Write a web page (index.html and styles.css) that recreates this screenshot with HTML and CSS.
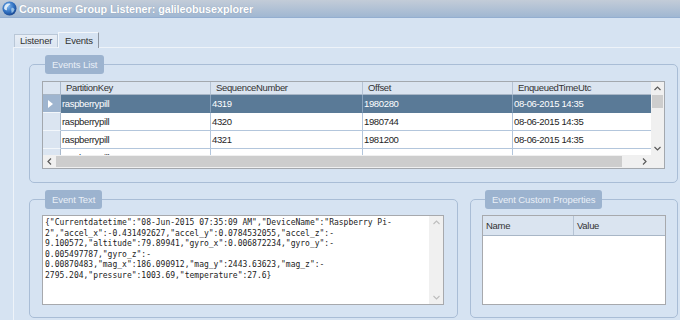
FILE: index.html
```html
<!DOCTYPE html>
<html>
<head>
<meta charset="utf-8">
<link rel="stylesheet" href="styles.css">
</head>
<body>
<div class="window">
  <div class="titlebar">
    <svg class="globe" width="15" height="15" viewBox="0 0 15 15">
      <defs>
        <radialGradient id="g1" cx="0.4" cy="0.35" r="0.7">
          <stop offset="0" stop-color="#7fb6ee"/>
          <stop offset="0.6" stop-color="#2f6fc0"/>
          <stop offset="1" stop-color="#17428a"/>
        </radialGradient>
      </defs>
      <circle cx="7.5" cy="7.5" r="7" fill="url(#g1)"/>
      <path d="M3 4.5 C4.5 2.5 7 2 8.5 3 C7.5 4 6.5 4.2 6 5.5 C5 6 4.5 7.5 5 9 C4 9.5 3 9 2.2 8 C2 6.8 2.3 5.5 3 4.5 Z" fill="#e9f3fb" opacity="0.9"/>
      <path d="M9.5 7 C10.5 6.5 12 7 12.5 8.5 C12 10 11 11.5 9.5 12 C9.8 10.5 9 9.5 9.2 8.5 Z" fill="#bfe0f5" opacity="0.7"/>
    </svg>
    <span class="title">Consumer Group Listener: galileobusexplorer</span>
  </div>
  <div class="tabstrip">
    <div class="tab">Listener</div>
    <div class="tab active">Events</div>
  </div>
  <div class="tabpage">
    <fieldset class="group events-list">
      <legend>Events List</legend>
      <div class="dgv">
        <div class="dgv-main">
          <div class="dgv-cells">
            <div class="dgv-row head">
              <div class="rh"></div>
              <div class="c">PartitionKey</div>
              <div class="c">SequenceNumber</div>
              <div class="c">Offset</div>
              <div class="c">EnqueuedTimeUtc</div>
            </div>
            <div class="dgv-row sel">
              <div class="rh"><svg width="5" height="8" viewBox="0 0 5 8"><path d="M0 0 L5 4 L0 8 Z" fill="#fff"/></svg></div>
              <div class="c">raspberrypill</div>
              <div class="c">4319</div>
              <div class="c">1980280</div>
              <div class="c">08-06-2015 14:35</div>
            </div>
            <div class="dgv-row">
              <div class="rh"></div>
              <div class="c">raspberrypill</div>
              <div class="c">4320</div>
              <div class="c">1980744</div>
              <div class="c">08-06-2015 14:35</div>
            </div>
            <div class="dgv-row">
              <div class="rh"></div>
              <div class="c">raspberrypill</div>
              <div class="c">4321</div>
              <div class="c">1981200</div>
              <div class="c">08-06-2015 14:35</div>
            </div>
            <div class="dgv-row">
              <div class="rh"></div>
              <div class="c">raspberrypill</div>
              <div class="c">4322</div>
              <div class="c">1981664</div>
              <div class="c">08-06-2015 14:35</div>
            </div>
          </div>
          <div class="vscroll">
            <div class="arrow"><svg width="7" height="5" viewBox="0 0 7 5"><path d="M0.5 4 L3.5 1 L6.5 4" fill="none" stroke="#5a5a5a" stroke-width="1.2"/></svg></div>
            <div class="vthumb"></div>
            <div class="track"></div>
            <div class="arrow"><svg width="7" height="5" viewBox="0 0 7 5"><path d="M0.5 1 L3.5 4 L6.5 1" fill="none" stroke="#5a5a5a" stroke-width="1.2"/></svg></div>
          </div>
        </div>
        <div class="hrow">
          <div class="hscroll">
            <div class="arrow"><svg width="5" height="7" viewBox="0 0 5 7"><path d="M4 0.5 L1 3.5 L4 6.5" fill="none" stroke="#5a5a5a" stroke-width="1.2"/></svg></div>
            <div class="hthumb"></div>
            <div class="track"></div>
            <div class="arrow"><svg width="5" height="7" viewBox="0 0 5 7"><path d="M1 0.5 L4 3.5 L1 6.5" fill="none" stroke="#5a5a5a" stroke-width="1.2"/></svg></div>
          </div>
          <div class="corner"></div>
        </div>
      </div>
    </fieldset>
    <div class="bottom-row">
      <fieldset class="group event-text">
        <legend>Event Text</legend>
        <div class="textbox">
          <div class="text">{"Currentdatetime":"08-Jun-2015 07:35:09 AM","DeviceName":"Raspberry Pi-
2","accel_x":-0.431492627,"accel_y":0.0784532055,"accel_z":-
9.100572,"altitude":79.89941,"gyro_x":0.006872234,"gyro_y":-
0.005497787,"gyro_z":-
0.00870483,"mag_x":186.090912,"mag_y":2443.63623,"mag_z":-
2795.204,"pressure":1003.69,"temperature":27.6}</div>
          <div class="tvscroll">
            <div class="arrow"><svg width="7" height="5" viewBox="0 0 7 5"><path d="M0.5 4 L3.5 1 L6.5 4" fill="none" stroke="#bdbdbd" stroke-width="1.1"/></svg></div>
            <div class="track"></div>
            <div class="arrow"><svg width="7" height="5" viewBox="0 0 7 5"><path d="M0.5 1 L3.5 4 L6.5 1" fill="none" stroke="#bdbdbd" stroke-width="1.1"/></svg></div>
          </div>
        </div>
      </fieldset>
      <fieldset class="group custom-props">
        <legend>Event Custom Properties</legend>
        <div class="propgrid">
          <div class="prophead">
            <div class="pc name">Name</div>
            <div class="pc">Value</div>
          </div>
        </div>
      </fieldset>
    </div>
  </div>
</div>
</body>
</html>
```
FILE: styles.css
```css
html, body {
  margin: 0;
  padding: 0;
}
body {
  background: #d6e3f2;
  font-family: "Liberation Sans", Arial, sans-serif;
}
.window {
  width: 680px;
  height: 320px;
  overflow: hidden;
  background: #d6e3f2;
}
.titlebar {
  height: 17px;
  border-bottom: 1px solid #93aed0;
  background: linear-gradient(#c3ccd8, #a0b7d2);
  display: flex;
  align-items: center;
  padding-left: 2px;
}
.globe {
  display: block;
  margin-right: 2px;
}
.title {
  color: #ffffff;
  font-weight: bold;
  font-size: 10.8px;
  letter-spacing: -0.05px;
  text-shadow: 0 0 1px rgba(60, 80, 110, 0.35);
}
.tabstrip {
  height: 29px;
  display: flex;
  align-items: flex-end;
  padding-left: 14px;
}
.tab {
  box-sizing: border-box;
  height: 13px;
  width: 44px;
  border: 1px solid #b9c7d7;
  border-bottom: none;
  background: linear-gradient(#e8eef6, #dbe5f1);
  font-size: 9.5px;
  color: #333;
  line-height: 12px;
  padding-left: 5px;
  letter-spacing: -0.2px;
}
.tab.active {
  height: 16px;
  width: 41px;
  background: #d6e3f2;
  border-left: 1px solid #f3f7fb;
  border-top: 1px solid #f3f7fb;
  border-right: 1px solid #8d96a2;
  line-height: 15px;
  padding-left: 6px;
  margin-bottom: -1px;
  position: relative;
}
.tabpage {
  margin-left: 13px;
  border-top: 1px solid #eef3f9;
  border-left: 1px solid #eef3f9;
  padding: 7px 2px 0 15px;
  height: 300px;
}
.group {
  margin: 0;
  border: 1px solid #a9bdd6;
  border-radius: 5px;
  min-width: 0;
  box-sizing: border-box;
}
.group legend {
  margin-left: 3px;
  padding: 0 7px;
  height: 19px;
  line-height: 19px;
  background: #9cb3cf;
  color: #e9eff7;
  border-radius: 3px;
  font-size: 9.5px;
  letter-spacing: -0.1px;
}
.events-list {
  width: 649px;
  padding: 7px 12px 13px 12px;
}
.dgv {
  width: 623px;
  height: 88px;
  box-sizing: border-box;
  border: 1px solid #a3a8ae;
  display: flex;
  flex-direction: column;
  background: #fff;
}
.dgv-main {
  display: flex;
  height: 73px;
}
.dgv-cells {
  flex: 1;
  overflow: hidden;
  font-size: 9.5px;
  letter-spacing: -0.35px;
  color: #1e1e1e;
}
.dgv-row {
  display: grid;
  grid-template-columns: 18px 150px 152px 150px 150px;
  height: 18px;
}
.dgv-row .c {
  box-sizing: border-box;
  border-right: 1px solid #b3c6dc;
  border-bottom: 1px solid #b3c6dc;
  padding-left: 1px;
  line-height: 17px;
  white-space: nowrap;
  overflow: hidden;
}
.dgv-row .rh {
  box-sizing: border-box;
  background: #dbe5f1;
  border-right: 1px solid #a9b9cc;
  border-bottom: 1px solid #f3f7fb;
  display: flex;
  align-items: center;
  padding-left: 5px;
}
.dgv-row.head {
  height: 13px;
}
.dgv-row.head .c {
  background: #dae4f0;
  border-right: 1px solid #b5c3d4;
  border-bottom: 1px solid #a8b6c6;
  line-height: 12px;
  padding-left: 5px;
  color: #333;
}
.dgv-row.head .c:first-of-type {
  padding-left: 4px;
}
.dgv-row.head .rh {
  border-bottom: 1px solid #a8b6c6;
}
.dgv-row.sel .c {
  background: #5a7a97;
  color: #ffffff;
  border-right: 1px solid #8aa3bd;
  border-bottom: 1px solid #5a7a97;
}
.dgv-row.sel .rh {
  background: #9fb5cf;
}
.vscroll {
  width: 13px;
  background: #f0f0f0;
  display: flex;
  flex-direction: column;
}
.arrow {
  width: 13px;
  height: 13px;
  display: flex;
  align-items: center;
  justify-content: center;
  flex: none;
}
.vthumb {
  height: 13px;
  margin: 0 1px;
  background: #cdcdcd;
}
.track {
  flex: 1;
}
.hrow {
  display: flex;
  height: 13px;
}
.hscroll {
  flex: 1;
  display: flex;
  background: #f0f0f0;
}
.hthumb {
  width: 566px;
  margin: 1px 0;
  background: #cdcdcd;
}
.corner {
  width: 13px;
  background: #f0f0f0;
}
.bottom-row {
  display: flex;
  gap: 12px;
  margin-top: 7px;
  width: 649px;
}
.event-text {
  width: 429px;
  padding: 6px 13px 12px 12px;
}
.textbox {
  width: 402px;
  height: 90px;
  box-sizing: border-box;
  border: 1px solid #a7a9ad;
  background: #fff;
  display: flex;
}
.text {
  flex: 1;
  white-space: pre;
  font-family: "DejaVu Sans Mono", "Liberation Mono", monospace;
  font-size: 8px;
  line-height: 10.6px;
  color: #222;
  padding: 2px 0 0 2px;
  overflow: hidden;
}
.tvscroll {
  width: 14px;
  background: #f0f0f0;
  display: flex;
  flex-direction: column;
}
.tvscroll .arrow {
  width: 14px;
}
.custom-props {
  width: 208px;
  padding: 6px 11px 12px 11px;
}
.propgrid {
  width: 184px;
  height: 90px;
  box-sizing: border-box;
  border: 1px solid #a7a9ad;
  background: #fff;
}
.prophead {
  display: flex;
  height: 20px;
  box-sizing: border-box;
  background: #dae4f0;
  border-bottom: 1px solid #a8b6c6;
  font-size: 9.5px;
  letter-spacing: -0.3px;
  color: #333;
}
.pc {
  line-height: 19px;
  padding-left: 3px;
  flex: 1;
}
.pc.name {
  flex: none;
  width: 91px;
  box-sizing: border-box;
  border-right: 1px solid #b5c3d4;
}
```
